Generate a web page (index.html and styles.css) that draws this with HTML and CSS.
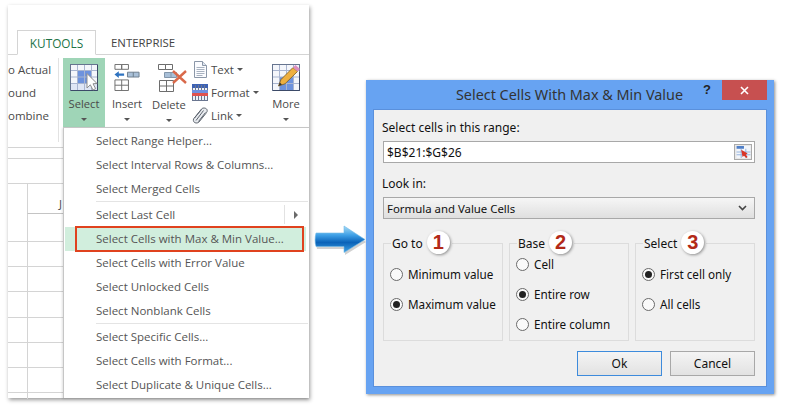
FILE: index.html
```html
<!DOCTYPE html>
<html lang="en">
<head>
<meta charset="utf-8">
<title>Select Cells With Max &amp; Min Value</title>
<link rel="stylesheet" href="styles.css">
</head>
<body>
<div class="canvas">
  <section class="sheet">
    <div class="tabs">
      <div class="tab active">KUTOOLS</div>
      <div class="tab">ENTERPRISE</div>
    </div>
    <div class="ribbon">
      <div class="clip">
        <span>o Actual</span>
        <span>ound</span>
        <span>ombine</span>
      </div>
      <div class="big selected">
        <svg class="ic28" viewBox="0 0 28 27">
          <rect x="0.5" y="0.5" width="27" height="26" fill="#f4f6fb" stroke="#66748f"/>
          <rect x="1" y="19" width="26" height="7" fill="#dfe6f5"/>
          <rect x="8" y="6.5" width="14" height="13" fill="#6d92dd"/>
          <path d="M7.5 1V26M14.5 1V26M21.5 1V26M1 6.5H27M1 13H27M1 19.5H27" stroke="#a9b5d0" fill="none"/>
          <path d="M1 26.5H27.5V1" stroke="#3c4a68" fill="none"/>
          <path d="M17 9.5V24L20.3 20.8L23 26L25.6 24.6L23 19.8L27 19.5Z" fill="#fff" stroke="#8d8d8d"/>
        </svg>
        <span class="big-label">Select</span>
        <i class="caret"></i>
      </div>
      <div class="big tight">
        <svg class="ic28" viewBox="0 0 28 28">
          <path d="M1.500 .5H8.500V5.500H1.500ZM8.500 .5H15.500V5.500H8.500ZM1.500 16.500H15.500V27.500H1.500ZM8.500 16.500V27.500M1.500 22H15.500" fill="#fff" stroke="#6d6d6d"/>
          <path d="M14.500 8.500H26.500V13.500H14.500ZM20.500 8.500V13.500" fill="#a9c0d8" stroke="#6d7d8d"/>
          <path d="M1 11L5.500 7.500V9.800H11V12.200H5.500V14.500Z" fill="#2f73c0"/>
        </svg>
        <span class="big-label">Insert</span>
        <i class="caret"></i>
      </div>
      <div class="big">
        <svg class="ic30" viewBox="0 0 30 28">
          <path d="M1.500 .5H8.500V5.500H1.500ZM8.500 .5H15.500V5.500H8.500ZM2.500 16.500H16.500V27.500H2.500ZM9.500 16.500V27.500M2.500 22H16.500" fill="#fff" stroke="#6d6d6d"/>
          <path d="M7.500 8.500H19.500V13.500H7.500ZM14 8.500V13.500" fill="#a9c0d8" stroke="#8296aa"/>
          <path d="M16 7L29 19M29 7L16 19" stroke="#d9694a" stroke-width="2.400" fill="none"/>
        </svg>
        <span class="big-label">Delete</span>
        <i class="caret"></i>
      </div>
      <div class="small-col">
        <div class="small">
          <svg class="ic16" viewBox="0 0 16 17">
            <path d="M2.500 .5H10.500L14.500 4.500V16.500H2.500Z" fill="#fbfcff" stroke="#8b97a8"/>
            <path d="M10.500 .5V4.500H14.500" fill="#dfe6f0" stroke="#8b97a8"/>
            <path d="M4.500 6.500H12.500M4.500 8.500H12.500M4.500 10.500H12.500M4.500 12.500H12.500M4.500 14.500H10.500" stroke="#a8b2c0"/>
          </svg>
          <span>Text</span><i class="caret"></i>
        </div>
        <div class="small">
          <svg class="ic16" viewBox="0 0 16 17">
            <rect x="0.500" y="0.500" width="15" height="16" fill="#eef1f8" stroke="#6a7690"/>
            <rect x="0" y="0" width="16" height="4" fill="#3d62b5"/>
            <rect x="0" y="6" width="16" height="3" fill="#6f8fe0"/>
            <rect x="0" y="9" width="16" height="3" fill="#e0524f"/>
            <path d="M3.500 1V6M6.500 1V6M9.500 1V6M12.500 1V6M3.500 12V16M6.500 12V16M9.500 12V16M12.500 12V16" stroke="#6a7690"/>
          </svg>
          <span>Format</span><i class="caret"></i>
        </div>
        <div class="small">
          <svg class="ic16" viewBox="0 0 16 17">
            <path d="M1.500 12L9.500 2C11 .3 15 .8 15.200 3.500C15.300 4.800 14.500 5.500 14 6.300L7 15C5 17 .5 16 1.500 12Z" fill="#e8ebef" stroke="#5f6670"/>
            <path d="M4 13.500L11.500 3.500M6.500 14.500L13.500 5.500M2.500 11L9.500 2.500" stroke="#5f6670" fill="none"/>
          </svg>
          <span>Link</span><i class="caret"></i>
        </div>
      </div>
      <div class="big">
        <svg class="ic28" viewBox="0 0 28 27">
          <rect x="0.500" y="0.500" width="27" height="26" fill="#f4f6fb" stroke="#66748f"/>
          <rect x="7.500" y="13" width="14" height="13" fill="#6d92dd"/>
          <path d="M7.500 1V26M14.500 1V26M21.500 1V26M1 6.500H27M1 13H27M1 19.500H27" stroke="#a9b5d0" fill="none"/>
          <path d="M1 26.500H27.500V8" stroke="#3c4a68" fill="none"/>
          <path d="M6.500 22L9 15.500L21 3.500L25.500 7.500L13 19.800Z" fill="#eeb040" stroke="#7a5a20" stroke-width=".8"/>
          <path d="M6.500 22L7.800 18.500L10 20.500Z" fill="#333"/>
          <path d="M21 3.500L23.500 1L28 5L25.500 7.500Z" fill="#dd8ec0"/>
        </svg>
        <span class="big-label">More</span>
        <i class="caret"></i>
      </div>
    </div>
    <div class="strip strip-a"></div>
    <div class="strip strip-b"></div>
    <div class="col-head"><span class="col-j">J</span></div>
    <div class="row r28"></div>
    <div class="row"></div>
    <div class="row"></div>
    <div class="row r26"></div>
    <div class="row"></div>
    <div class="row"></div>
    <div class="row"></div>
    <div class="row last"></div>

    <nav class="menu">
      <div class="item">Select Range Helper...</div>
      <div class="item">Select Interval Rows &amp; Columns...</div>
      <div class="item">Select Merged Cells</div>
      <div class="sep"></div>
      <div class="item has-sub">Select Last Cell<span class="sub"></span></div>
      <div class="item current">Select Cells with Max &amp; Min Value...</div>
      <div class="item">Select Cells with Error Value</div>
      <div class="item">Select Unlocked Cells</div>
      <div class="item">Select Nonblank Cells</div>
      <div class="sep"></div>
      <div class="item">Select Specific Cells...</div>
      <div class="item">Select Cells with Format...</div>
      <div class="item">Select Duplicate &amp; Unique Cells...</div>
    </nav>
  </section>

  <svg class="arrow" viewBox="0 0 54 32">
    <defs>
      <linearGradient id="ag" x1="0" y1="0" x2="0" y2="1">
        <stop offset="0" stop-color="#a8dcf5"/>
        <stop offset=".35" stop-color="#3d9fe6"/>
        <stop offset=".62" stop-color="#0a62b8"/>
        <stop offset="1" stop-color="#3fa2e4"/>
      </linearGradient>
    </defs>
    <path d="M2 8.500H30V1.500L51 15L30 28V22H2C.8 18 .8 12 2 8.500Z" fill="#000" opacity=".18" transform="translate(1 2)"/>
    <path d="M2 8H30V1L51 14.500L30 27.500V21.500H2C.8 18 .8 12 2 8Z" fill="url(#ag)" stroke="#6fb8e8" stroke-width=".6"/>
  </svg>

  <section class="dialog">
    <header class="titlebar">
      <span></span>
      <h1 class="title">Select Cells With Max &amp; Min Value</h1>
      <div class="controls">
        <span class="help">?</span>
        <span class="close">
          <svg class="x" viewBox="0 0 9 9"><path d="M1 1L8 8M8 1L1 8" stroke="#fff" stroke-width="1.600"/></svg>
        </span>
      </div>
    </header>
    <div class="body">
      <div class="label">Select cells in this range:</div>
      <div class="input">
        <span>$B$21:$G$26</span>
        <span class="range-btn">
          <svg class="ic-range" viewBox="0 0 15 13">
            <rect x="0" y="0" width="15" height="13" fill="#f3f6fb"/>
            <rect x="0" y="0" width="8" height="3" fill="#4f7fc8"/>
            <path d="M0 6.500H15M0 9.500H15M5 3V13M10 3V13" stroke="#8fb0dc"/>
            <path d="M5 4L12 8L10 9.500L12 12L10.500 13L8 10.500L6.500 12Z" fill="#d9362a"/>
          </svg>
        </span>
      </div>
      <div class="label gap">Look in:</div>
      <div class="select">
        <span>Formula and Value Cells</span>
        <svg class="chev" viewBox="0 0 9 6"><path d="M1 1L4.500 4.500L8 1" fill="none" stroke="#444" stroke-width="1.600"/></svg>
      </div>
      <div class="groups">
        <fieldset class="group spaced">
          <legend><span>Go to</span><b class="badge">1</b></legend>
          <div class="radio"><i class="dot"></i>Minimum value</div>
          <div class="radio"><i class="dot on"></i>Maximum value</div>
        </fieldset>
        <fieldset class="group">
          <legend><span>Base</span><b class="badge">2</b></legend>
          <div class="radio"><i class="dot"></i>Cell</div>
          <div class="radio"><i class="dot on"></i>Entire row</div>
          <div class="radio"><i class="dot"></i>Entire column</div>
        </fieldset>
        <fieldset class="group spaced">
          <legend><span>Select</span><b class="badge">3</b></legend>
          <div class="radio"><i class="dot on"></i>First cell only</div>
          <div class="radio"><i class="dot"></i>All cells</div>
        </fieldset>
      </div>
      <div class="actions">
        <div class="btn primary">Ok</div>
        <div class="btn">Cancel</div>
      </div>
    </div>
  </section>
</div>
</body>
</html>
```
FILE: styles.css
```css
* { box-sizing: border-box; }
html, body { margin: 0; padding: 0; background: #fff; }
.canvas { position: relative; width: 786px; height: 406px; overflow: hidden; font-family: "Noto Sans", "Open Sans", sans-serif; }

/* Excel window */
.sheet { position: absolute; left: 8px; top: 5px; width: 301px; height: 393px; background: #fff; box-shadow: 1px 2px 4px rgba(0,0,0,.4); font-family: "Open Sans", "Noto Sans", sans-serif; color: #4a4a4a; }
.tabs { display: flex; height: 50px; padding: 25px 0 0 9px; border-bottom: 1px solid #d4d4d4; font-size: 11.400px; }
.tab { height: 25px; line-height: 26px; padding: 0 15px; color: #444; }
.tab.active { width: 79px; padding: 0; text-align: center; font-size: 11.800px; color: #217346; border: 1px solid #d4d4d4; border-bottom: 1px solid #fff; line-height: 24px; }
.ribbon { display: flex; height: 93px; padding-top: 3px; border-bottom: 1px solid #d4d4d4; font-size: 11.500px; }
.clip { width: 51px; height: 84px; display: flex; flex-direction: column; padding-top: 1px; margin-right: 4px; border-right: 1px solid #e2e2e2; white-space: nowrap; }
.clip span { height: 23px; line-height: 22px; }
.big { width: 42px; height: 71px; display: flex; flex-direction: column; align-items: center; padding-top: 6px; margin-right: 1px; }
.big.tight { margin-right: 0; }
.big.selected { background: #9fd5b7; }
.ic28 { width: 28px; height: 27px; display: block; }
.ic30 { width: 30px; height: 28px; display: block; margin-left: 6px; }
.big-label { margin-top: 4px; line-height: 18px; font-size: 11.200px; }
.caret { display: block; width: 0; height: 0; border: 3px solid transparent; border-top: 3px solid #555; border-bottom: 0; }
.big .caret { margin-top: 5px; }
.small-col { width: 72px; margin: 0 1px 0 1px; display: flex; flex-direction: column; }
.small { height: 23px; display: flex; align-items: center; gap: 3px; }
.ic16 { width: 16px; height: 17px; display: block; }
.strip { border-bottom: 1px solid #d4d4d4; }
.strip-a { height: 11px; }
.strip-b { height: 25px; }
.col-head { height: 30px; margin-left: 19px; padding: 10px 0 0 31px; border-left: 1px solid #d4d4d4; border-bottom: 1px solid #c4c4c4; font-size: 11px; line-height: 20px; }
.row { height: 25px; margin-left: 0; border-bottom: 1px solid #d4d4d4; background: linear-gradient(#d4d4d4, #d4d4d4) 19px 0 / 1px 100% no-repeat; }
.row.r28 { height: 28px; }
.row.r26 { height: 26px; }
.row.last { border-bottom: 0; height: 6px; }

/* Menu overlay */
.menu { position: absolute; left: 55px; top: 122px; width: 246px; height: 271px; padding-top: 1px; background: #fff; border-top: 1px solid #c6c6c6; border-left: 1px solid #c6c6c6; box-shadow: -1px 1px 2px rgba(0,0,0,.12); font-size: 11.500px; color: #555; }
.item { position: relative; height: 24px; line-height: 24px; padding-left: 32px; white-space: nowrap; }
.sep { height: 2px; margin-left: 32px; margin-right: 1px; background: linear-gradient(#e4e4e4, #e4e4e4) 0 0 / 100% 1px no-repeat; }
.sub { position: absolute; right: 11px; top: 8px; width: 0; height: 0; border: 4px solid transparent; border-left: 4px solid #6a6a6a; border-right: 0; }
.has-sub::before { content: ""; position: absolute; left: 220px; top: 2px; width: 1px; height: 19px; background: #e2e2e2; }
.current { margin: 0 3px 0 1px; padding-left: 31px; background: #d1eedd; }
.current::after { content: ""; position: absolute; left: 10px; right: 2px; top: -1px; bottom: -1px; border: 2px solid #e0421e; }

.arrow { position: absolute; left: 314px; top: 225px; width: 54px; height: 32px; }

/* Dialog */
.dialog { position: absolute; left: 366px; top: 80px; width: 408px; height: 314px; background: #67a3f2; box-shadow: 1px 1px 3px rgba(0,0,0,.45); color: #111; display: flex; flex-direction: column; }
.titlebar { display: grid; grid-template-columns: 1fr auto 1fr; height: 29px; padding: 0 7px 0 6px; }
.title { margin: 0; font-size: 14.400px; font-weight: 400; line-height: 29px; color: #333; white-space: nowrap; }
.controls { display: flex; justify-content: flex-end; align-items: flex-start; gap: 11px; }
.help { font: 700 13px/19px "Liberation Sans", sans-serif; color: #222; }
.close { width: 45px; height: 20px; background: #c75050; display: flex; align-items: center; justify-content: center; }
.x { width: 9px; height: 9px; display: block; }
.body { flex: 1; margin: 0 7px 7px; padding: 10px 11px 0 8px; background: #f0f0f0; border: 1px solid #5a90dc; font-size: 12px; }
.label { line-height: 16px; height: 16px; }
.label.gap { margin-top: 13px; }
.input { display: flex; align-items: center; justify-content: space-between; height: 22px; margin: 5px 0 0 1px; padding: 0 2px 0 3px; background: #fff; border: 1px solid #a8a8a8; }
.range-btn { display: flex; align-items: center; justify-content: center; width: 18px; height: 16px; background: #e8e8e8; border: 1px solid #aaa; }
.ic-range { width: 15px; height: 12px; display: block; }
.select { display: flex; align-items: center; justify-content: space-between; height: 22px; margin: 5px 0 0 1px; padding: 0 7px 0 3px; background: linear-gradient(#f6f6f6, #dfdfdf); border: 1px solid #a8a8a8; font-size: 11.400px; }
.chev { width: 9px; height: 6px; display: block; }
.groups { display: flex; gap: 6px; margin: 17px 0 0 1px; }
.group { width: 120px; height: 105px; margin: 0; padding: 0 0 0 6px; border: 1px solid #dcdcdc; min-inline-size: 0; }
.group.spaced { padding-top: 10px; }
.group legend { display: flex; align-items: center; height: 14px; margin: 0 0 -1px 1px; padding: 0 2px 0 1px; line-height: 13px; }
.badge { display: flex; align-items: center; justify-content: center; flex: none; width: 23px; height: 23px; margin: -1px 0 -9px 4px; border-radius: 50%; background: #fff; box-shadow: 1px 1px 3px rgba(0,0,0,.4); color: #b32a18; font: 700 20px/1 "Liberation Sans", sans-serif; position: relative; top: -5px; }
.radio { display: flex; align-items: center; gap: 5px; height: 30px; white-space: nowrap; font-size: 11.700px; }
.dot { flex: none; width: 13px; height: 13px; border-radius: 50%; border: 1px solid #6a6a6a; background: #fafafa; display: flex; align-items: center; justify-content: center; }
.dot.on::after { content: ""; width: 7px; height: 7px; border-radius: 50%; background: #222; }
.actions { display: flex; justify-content: flex-end; gap: 8px; margin-top: 10px; }
.btn { width: 85px; height: 25px; line-height: 23px; text-align: center; background: linear-gradient(#f4f4f4, #e2e2e2); border: 1px solid #a8a8a8; }
.btn.primary { border-color: #3d8bdc; }
```
